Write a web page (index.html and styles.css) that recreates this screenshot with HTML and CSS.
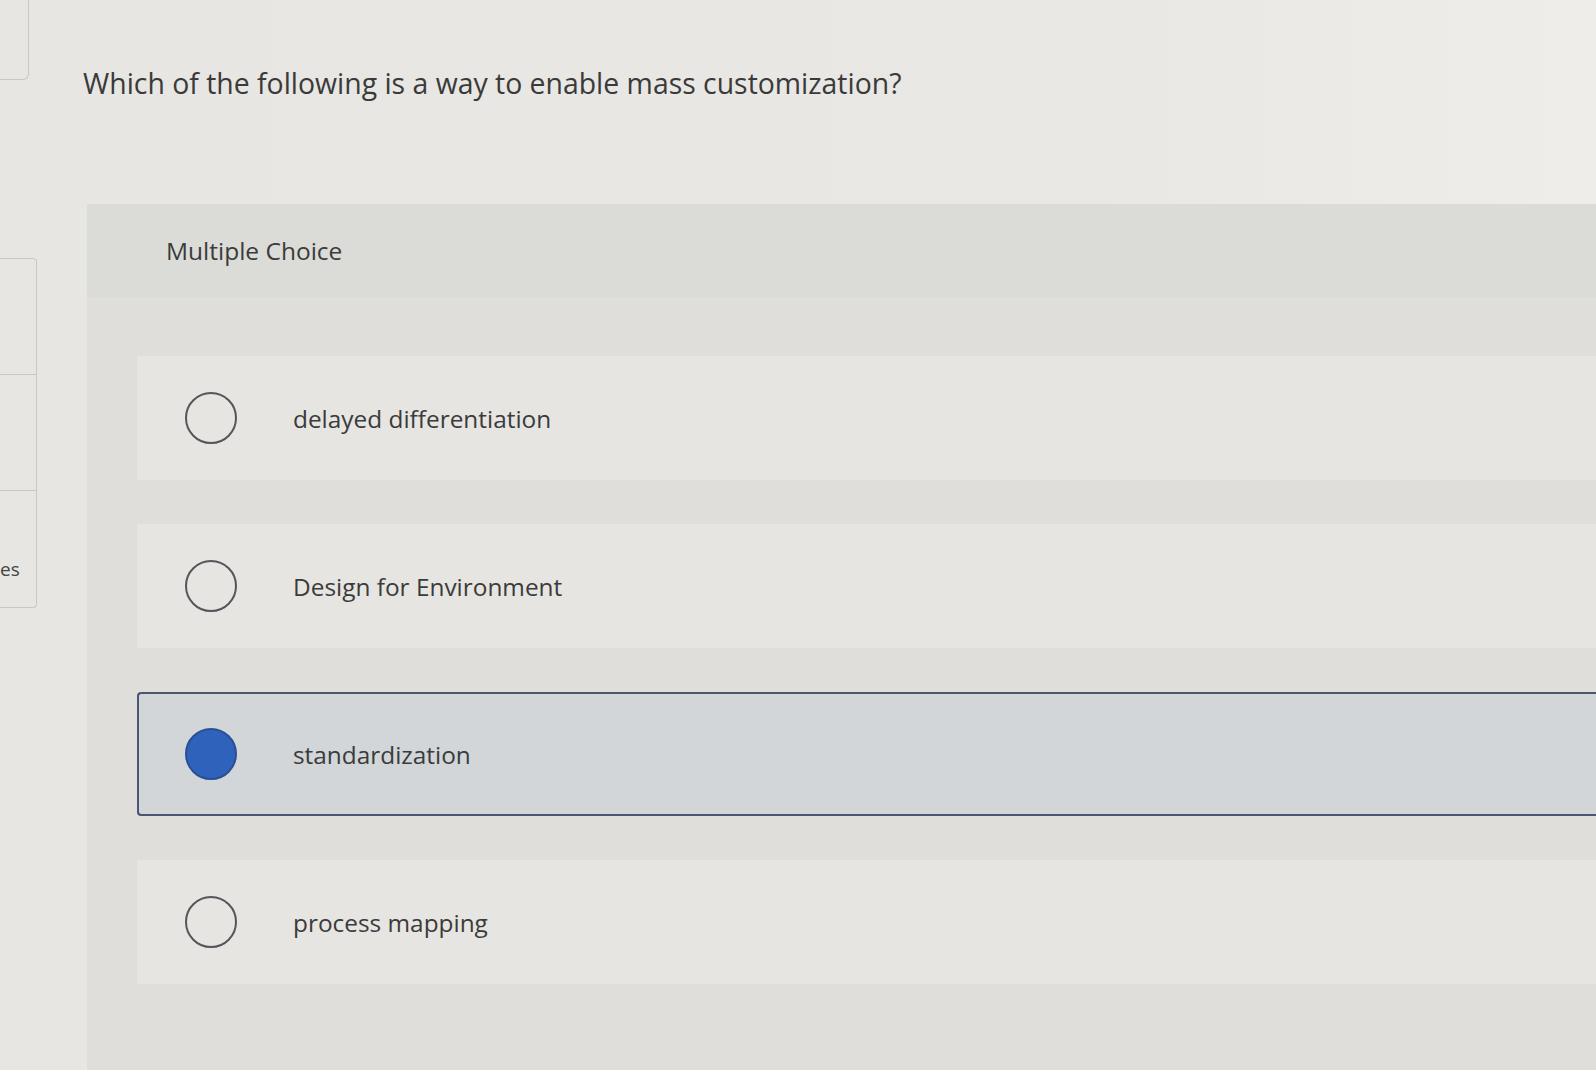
FILE: index.html
```html
<!DOCTYPE html>
<html lang="en">
  <head>
    <meta charset="UTF-8" />
    <meta name="viewport" content="width=device-width, initial-scale=1.0" />
    <title>Multiple Choice</title>
    <link rel="stylesheet" href="styles.css">
  </head>
  <body>
    <div class="page">
      <aside class="sidebar">
        <div class="side-top"></div>
        <div class="side-list">
          <div class="side-item"></div>
          <div class="side-item"></div>
          <div class="side-item side-label">es</div>
        </div>
      </aside>

      <main class="content">
        <h1 class="question">Which of the following is a way to enable mass customization?</h1>

        <section class="choice-panel">
          <div class="choice-header">Multiple Choice</div>
          <div class="choice-list">
            <label class="choice">
              <span class="radio"></span>
              <span class="choice-text">delayed differentiation</span>
            </label>
            <label class="choice">
              <span class="radio"></span>
              <span class="choice-text">Design for Environment</span>
            </label>
            <label class="choice selected">
              <span class="radio"></span>
              <span class="choice-text">standardization</span>
            </label>
            <label class="choice">
              <span class="radio"></span>
              <span class="choice-text">process mapping</span>
            </label>
          </div>
        </section>
      </main>
    </div>
  </body>
</html>
```

FILE: styles.css
```css
* {
  margin: 0;
  padding: 0;
  box-sizing: border-box;
}

:root {
  --page-bg: #e8e7e3;
  --header-bg: #dbdbd8;
  --panel-bg: #dfdedb;
  --row-bg: #e6e5e2;
  --selected-bg: #d2d6d9;
  --selected-border: #4b5672;
  --line: #c9c8c4;
  --text: #3b3b3b;
  --radio: #55555a;
  --blue: #2f62bb;
}

body {
  height: 100vh;
  overflow: hidden;
  background: linear-gradient(90deg, #e7e6e2 0%, #e9e8e4 70%, #eeede9 100%);
  color: var(--text);
  font-family: "Open Sans", "Lato", sans-serif;
}

.page {
  display: flex;
  height: 100%;
}

.sidebar {
  width: 37px;
  flex-shrink: 0;
}

.side-top {
  width: 29px;
  height: 80px;
  border-right: 1px solid var(--line);
  border-bottom: 1px solid var(--line);
  border-bottom-right-radius: 6px;
}

.side-list {
  margin-top: 178px;
  border: 1px solid var(--line);
  border-left: none;
  border-radius: 0 4px 4px 0;
}

.side-item {
  height: 116px;
  border-bottom: 1px solid var(--line);
}

.side-item:last-child {
  border-bottom: none;
}

.side-label {
  display: flex;
  align-items: flex-end;
  padding: 0 0 25px 0;
  font-size: 19px;
  color: #444;
  overflow: hidden;
}

.content {
  flex: 1;
  padding-left: 46px;
  overflow: hidden;
}

.question {
  margin-top: 66px;
  font-size: 28.4px;
  font-weight: 400;
  line-height: 35px;
  color: #3a3a3a;
}

.choice-panel {
  margin: 103px 0 0 4px;
  width: calc(100% + 20px);
  height: 900px;
  background-color: var(--panel-bg);
}

.choice-header {
  height: 93px;
  padding-left: 79px;
  display: flex;
  align-items: center;
  font-size: 24.5px;
  background-color: var(--header-bg);
}

.choice-list {
  display: flex;
  flex-direction: column;
  gap: 44px;
  padding: 59px 0 0 50px;
}

.choice {
  display: flex;
  align-items: center;
  gap: 56px;
  height: 124px;
  padding-left: 48px;
  background-color: var(--row-bg);
  font-size: 24.4px;
  cursor: pointer;
}

.radio {
  width: 52px;
  height: 52px;
  border: 2px solid var(--radio);
  border-radius: 50%;
  flex-shrink: 0;
}

.selected {
  background-color: var(--selected-bg);
  border: 2px solid var(--selected-border);
  border-right: none;
  border-radius: 4px 0 0 4px;
  padding-left: 46px;
}

.selected .radio {
  background-color: var(--blue);
  border-color: #2a4f93;
}
```
